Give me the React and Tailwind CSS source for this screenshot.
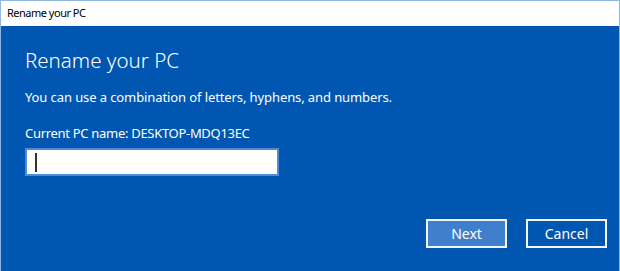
export default function App() {
  return (
    <div
      className="w-[620px] h-[271px] flex flex-col border-x border-t border-[#8fb6e3] bg-[#0056b0] overflow-hidden"
      style={{ fontFamily: '"Noto Sans", "Open Sans", sans-serif' }}
    >
      <div className="h-[25px] bg-white flex items-center pl-[6px] text-[11px] tracking-[-0.5px] text-black shrink-0">
        Rename your PC
      </div>
      <div className="flex-1 flex flex-col pl-[24px] pr-[12px] text-white">
        <h1 className="mt-[19px] text-[20.5px] font-light leading-[30px]">Rename your PC</h1>
        <p className="mt-[12px] text-[13px] tracking-[-0.1px] leading-[20px]">
          You can use a combination of letters, hyphens, and numbers.
        </p>
        <p className="mt-[16px] text-[13px] tracking-[-0.3px] leading-[20px]">Current PC name: DESKTOP-MDQ13EC</p>
        <div className="mt-[5px] w-[254px] h-[28px] bg-white border-2 border-[#4d8bd3] flex items-center pl-[8px]">
          <div className="w-[2px] h-[19px] bg-[#333]" />
        </div>
        <div className="mt-auto mb-[23px] flex justify-end gap-[19px]">
          <button className="w-[81px] h-[29px] border-2 border-[#f2f6fb] bg-[#3f7fcb] text-[14px] text-white">
            Next
          </button>
          <button className="w-[81px] h-[29px] border-2 border-[#f2f6fb] text-[14px] text-white">
            Cancel
          </button>
        </div>
      </div>
    </div>
  );
}
